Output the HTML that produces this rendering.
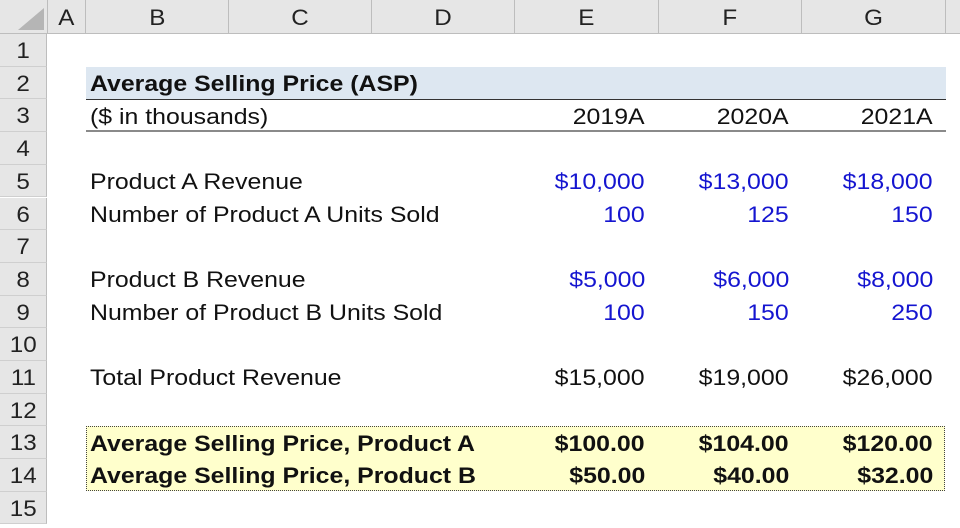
<!DOCTYPE html>
<html style="overflow:hidden"><head><style>
html,body{margin:0;width:960px;height:528px;overflow:hidden}
body{background:#fff;font-family:"Liberation Sans",Arial,sans-serif;position:relative}
.a{position:absolute}
.hdr{top:0;height:34px;background:#e6e6e6;border-bottom:1px solid #bdbdbd;font-size:22px;color:#222;text-align:center;line-height:36px;box-sizing:border-box}
.rh{left:0;width:47px;background:#e6e6e6;border-right:1px solid #bdbdbd;border-bottom:1px solid #cfcfcf;font-size:22px;color:#222;text-align:center;box-sizing:border-box;height:32.7px;line-height:33px}
.t{font-size:22px;line-height:33px;white-space:nowrap;color:#111;transform:scaleX(1.13);transform-origin:left center}
.r{text-align:right;transform-origin:right center}
.b{font-weight:bold}
.bl{color:#1515d0}
.s{display:inline-block;transform:scaleX(1.1)}
</style></head><body>
<div class="a hdr" style="left:0;width:48px;border-right:1px solid #bdbdbd"></div>
<svg class="a" style="left:12px;top:6px" width="34" height="26"><polygon points="32,2 32,24 6,24" fill="#b5b5b5"/></svg>
<div class="a hdr" style="left:48px;width:38px;border-right:1px solid #bdbdbd"><span class="s">A</span></div>
<div class="a hdr" style="left:86px;width:143px;border-right:1px solid #bdbdbd"><span class="s">B</span></div>
<div class="a hdr" style="left:229px;width:143px;border-right:1px solid #bdbdbd"><span class="s">C</span></div>
<div class="a hdr" style="left:372px;width:143px;border-right:1px solid #bdbdbd"><span class="s">D</span></div>
<div class="a hdr" style="left:515px;width:144px;border-right:1px solid #bdbdbd"><span class="s">E</span></div>
<div class="a hdr" style="left:659px;width:143px;border-right:1px solid #bdbdbd"><span class="s">F</span></div>
<div class="a hdr" style="left:802px;width:144px;border-right:1px solid #bdbdbd"><span class="s">G</span></div>
<div class="a hdr" style="left:946px;width:14px"></div>
<div class="a rh" style="top:34px"><span class="s">1</span></div>
<div class="a rh" style="top:66.7px"><span class="s">2</span></div>
<div class="a rh" style="top:99.4px"><span class="s">3</span></div>
<div class="a rh" style="top:132.1px"><span class="s">4</span></div>
<div class="a rh" style="top:164.8px"><span class="s">5</span></div>
<div class="a rh" style="top:197.5px"><span class="s">6</span></div>
<div class="a rh" style="top:230.2px"><span class="s">7</span></div>
<div class="a rh" style="top:262.9px"><span class="s">8</span></div>
<div class="a rh" style="top:295.6px"><span class="s">9</span></div>
<div class="a rh" style="top:328.3px"><span class="s">10</span></div>
<div class="a rh" style="top:361px"><span class="s">11</span></div>
<div class="a rh" style="top:393.7px"><span class="s">12</span></div>
<div class="a rh" style="top:426.4px"><span class="s">13</span></div>
<div class="a rh" style="top:459.1px"><span class="s">14</span></div>
<div class="a rh" style="top:491.8px"><span class="s">15</span></div>
<div class="a" style="left:86px;top:67px;width:860px;height:32px;background:#dde7f1;border-bottom:1px solid #333"></div>
<div class="a" style="left:86px;top:130px;width:860px;height:2px;background:#8a8a8a"></div>
<div class="a" style="left:86px;top:426px;width:859px;height:65px;background:#ffffcc;border:1px dotted #444;box-sizing:border-box"></div>

<div class="a t b" style="left:90px;top:67px">Average Selling Price (ASP)</div>
<div class="a t" style="left:90px;top:100px">($ in thousands)</div>
<div class="a t r" style="right:315px;top:100px">2019A</div>
<div class="a t r" style="right:171px;top:100px">2020A</div>
<div class="a t r" style="right:27px;top:100px">2021A</div>

<div class="a t" style="left:90px;top:165px">Product A Revenue</div>
<div class="a t r bl" style="right:315px;top:165px">$10,000</div>
<div class="a t r bl" style="right:171px;top:165px">$13,000</div>
<div class="a t r bl" style="right:27px;top:165px">$18,000</div>
<div class="a t" style="left:90px;top:198px">Number of Product A Units Sold</div>
<div class="a t r bl" style="right:315px;top:198px">100</div>
<div class="a t r bl" style="right:171px;top:198px">125</div>
<div class="a t r bl" style="right:27px;top:198px">150</div>

<div class="a t" style="left:90px;top:263px">Product B Revenue</div>
<div class="a t r bl" style="right:315px;top:263px">$5,000</div>
<div class="a t r bl" style="right:171px;top:263px">$6,000</div>
<div class="a t r bl" style="right:27px;top:263px">$8,000</div>
<div class="a t" style="left:90px;top:296px">Number of Product B Units Sold</div>
<div class="a t r bl" style="right:315px;top:296px">100</div>
<div class="a t r bl" style="right:171px;top:296px">150</div>
<div class="a t r bl" style="right:27px;top:296px">250</div>

<div class="a t" style="left:90px;top:361px">Total Product Revenue</div>
<div class="a t r" style="right:315px;top:361px">$15,000</div>
<div class="a t r" style="right:171px;top:361px">$19,000</div>
<div class="a t r" style="right:27px;top:361px">$26,000</div>

<div class="a t b" style="left:90px;top:427px">Average Selling Price, Product A</div>
<div class="a t r b" style="right:315px;top:427px">$100.00</div>
<div class="a t r b" style="right:171px;top:427px">$104.00</div>
<div class="a t r b" style="right:27px;top:427px">$120.00</div>
<div class="a t b" style="left:90px;top:459px">Average Selling Price, Product B</div>
<div class="a t r b" style="right:315px;top:459px">$50.00</div>
<div class="a t r b" style="right:171px;top:459px">$40.00</div>
<div class="a t r b" style="right:27px;top:459px">$32.00</div>
</body></html>
